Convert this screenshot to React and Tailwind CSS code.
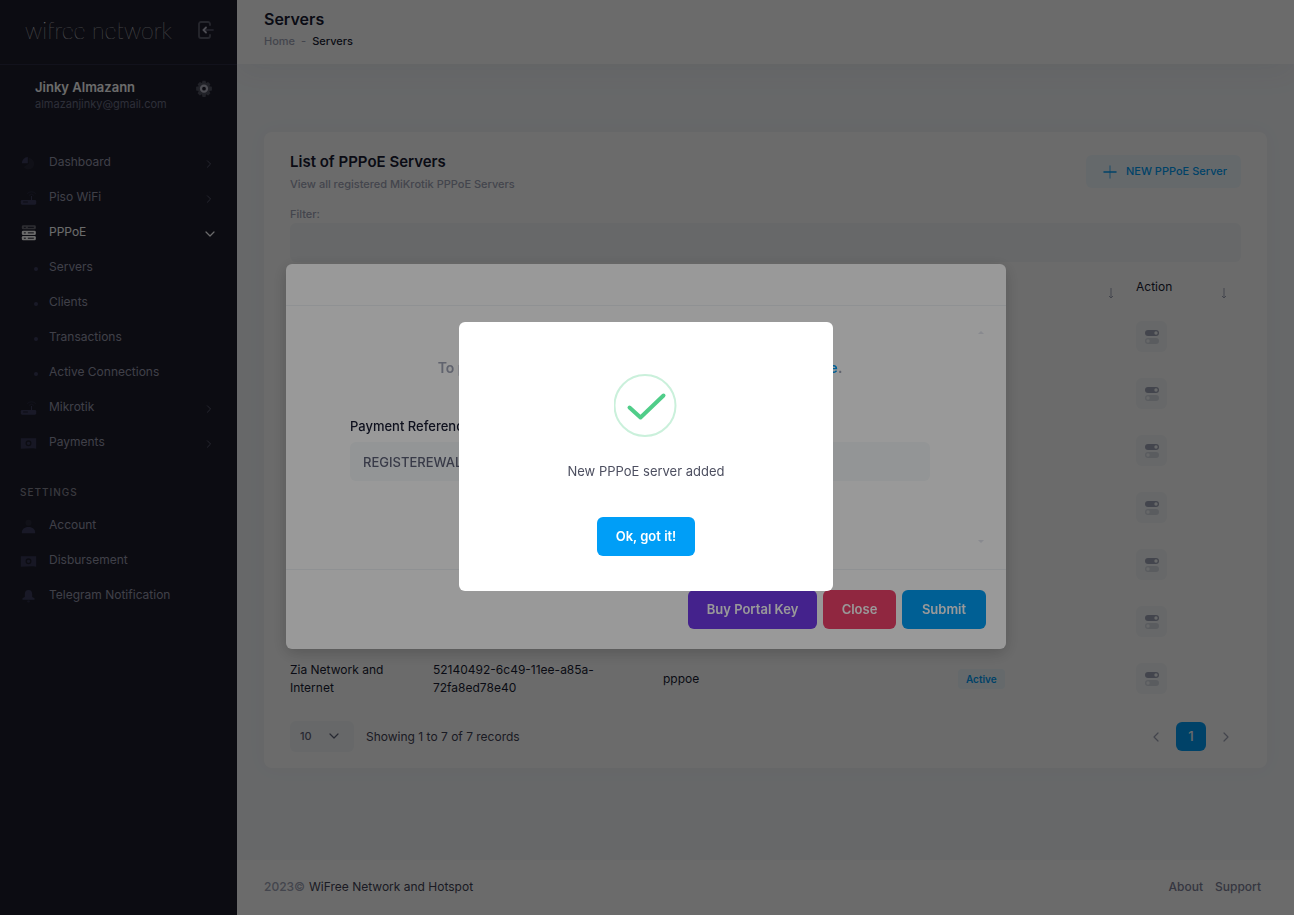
import React from 'react';

const icons = {
  chart: (
    <>
      <path d="M12.500 4.500A8.500 8.500 0 1 1 5 18l7.500-5Z" fill="#494b5e" opacity="0.35" />
      <path d="M2 12.500A9.500 9.500 0 0 1 11 3v9.500Z" fill="#494b74" />
    </>
  ),
  router: (
    <>
      <rect x="0.500" y="15" width="23" height="7" rx="2" fill="#494b74" />
      <path d="M4 18h7" stroke="#1e1e2d" strokeWidth="1.500" />
      <path d="M16.500 9v6" stroke="#494b74" strokeWidth="1.500" />
      <path d="M10 5.500a9 9 0 0 1 13 0M13 8a5 5 0 0 1 7 0" stroke="#494b74" strokeWidth="1.500" opacity="0.4" fill="none" />
    </>
  ),
  servers: (
    <>
      <rect x="2" y="0.500" width="21" height="6" rx="2" fill="#fff" opacity="0.35" />
      <rect x="2" y="8.500" width="21" height="6.500" rx="2" fill="#fff" />
      <rect x="2" y="16.500" width="21" height="6.500" rx="2" fill="#fff" />
      <path d="M5 3.500h3M11 3.500h9M5 11.800h3M11 11.800h9M5 19.800h3M11 19.800h9" stroke="#1e1e2d" strokeWidth="1.500" />
    </>
  ),
  money: (
    <>
      <path d="M0.500 5h23v15.500c-8-1.500-15 0-23 0Z" fill="#494b74" opacity="0.85" />
      <circle cx="12" cy="12.500" r="3.500" fill="none" stroke="#1e1e2d" strokeWidth="2" />
    </>
  ),
  user: (
    <>
      <circle cx="12" cy="7" r="4.500" fill="#494b5e" opacity="0.4" />
      <path d="M2 22c0-5 4-8.500 10-8.500S22 17 22 22c0 .6-.4 1-1 1H3c-.6 0-1-.4-1-1Z" fill="#494b74" />
    </>
  ),
  bell: (
    <>
      <path d="M12 3c3.500 0 5.500 2.500 5.500 6v4.500l3.500 2v2H3v-2l3.500-2V9c0-3.500 2-6 5.500-6Z" fill="#494b74" />
      <circle cx="12" cy="20" r="1.800" fill="#494b74" opacity="0.5" />
    </>
  ),
};

const mainMenu = [
  { label: 'Dashboard', icon: 'chart', arrow: true },
  { label: 'Piso WiFi', icon: 'router', arrow: true },
  { label: 'PPPoE', icon: 'servers', open: true, children: ['Servers', 'Clients', 'Transactions', 'Active Connections'] },
  { label: 'Mikrotik', icon: 'router', arrow: true },
  { label: 'Payments', icon: 'money', arrow: true },
];

const settingsMenu = [
  { label: 'Account', icon: 'user' },
  { label: 'Disbursement', icon: 'money' },
  { label: 'Telegram Notification', icon: 'bell' },
];

const servers = [
  {}, {}, {}, {}, {}, {},
  { name: 'Zia Network and Internet', key: '52140492-6c49-11ee-a85a-72fa8ed78e40', service: 'pppoe', status: 'Active' },
];

const Chevron = ({ className, d = 'M3 1l4 4-4 4' }) => (
  <svg viewBox="0 0 10 10" className={className} fill="none" stroke="currentColor" strokeWidth="1.200" strokeLinecap="round" strokeLinejoin="round" aria-hidden="true">
    <path d={d} />
  </svg>
);

const MenuItem = ({ item }) => (
  <li>
    <a href="#" className={`flex h-[35px] items-center pl-5 pr-[22px] text-xs ${item.open ? 'text-white' : 'text-[#9899ac]'}`}>
      <svg viewBox="0 0 24 24" className={`mr-3 mt-0.5 h-4 w-[17px] ${item.open ? '' : 'opacity-70'}`} aria-hidden="true">{icons[item.icon]}</svg>
      <span className="flex-1">{item.label}</span>
      {item.arrow && <Chevron className="mt-1 mr-0.5 size-2 text-[#5c5e72]" />}
      {item.open && <Chevron className="mt-1 size-2.5 text-white" d="M1 3l4 4 4-4" />}
    </a>
    {item.children && (
      <ul>
        {item.children.map((child) => (
          <li key={child}>
            <a href="#" className="flex h-[35px] items-center pl-[34px] text-xs text-[#9899ac]">
              <span className="mr-[11px] mt-1 size-1 rounded-full bg-[#494b74] opacity-70" />
              {child}
            </a>
          </li>
        ))}
      </ul>
    )}
  </li>
);

const Sidebar = () => (
  <aside className="flex w-[237px] shrink-0 flex-col bg-[#1e1e2d]">
    <div className="flex h-[65px] items-center justify-between border-b border-[#2d2d43] pb-1 pl-[25px] pr-[23px]">
      <a href="#" className="font-['Lato',sans-serif] text-[23px] font-thin leading-6 text-white">wifree network</a>
      <button type="button" aria-label="Toggle sidebar">
        <svg viewBox="0 0 16 18" className="h-[18px] w-4" fill="none" strokeWidth="1.800" strokeLinecap="round">
          <path d="M12 4V3a2 2 0 0 0-2-2H3a2 2 0 0 0-2 2v12a2 2 0 0 0 2 2h7a2 2 0 0 0 2-2v-1" stroke="#5c5d6c" />
          <path d="M8 9h7" stroke="#4a4b5e" />
          <path d="M8 6.500 5.500 9 8 11.500" stroke="#b5b5c3" />
        </svg>
      </button>
    </div>

    <div className="flex justify-between pb-8 pl-[35px] pr-6 pt-[13px]">
      <div>
        <div className="text-[13px] font-semibold leading-[18px] text-white">Jinky Almazann</div>
        <a href="#" className="block text-[11px] leading-4 text-[#6c7086]">almazanjinky@gmail.com</a>
      </div>
      <button type="button" aria-label="User settings" className="mt-0.5 size-[18px]">
        <svg viewBox="0 0 24 24" className="size-[18px]">
          <path d="M10 1h4l.8 3 2.700-1.500 3 3L19 8.200l3.500.8v5l-3.500.8 1.500 2.700-3 3-2.700-1.500-.8 3.500h-4l-.8-3.500-2.700 1.500-3-3L5 14.800 1.500 14V9L5 8.200 3.500 5.500l3-3L9.200 4Z" fill="#50515f" />
          <circle cx="12" cy="11.500" r="4" fill="#1e1e2d" stroke="#b5b5c3" strokeWidth="3" />
        </svg>
      </button>
    </div>

    <nav aria-label="Main">
      <ul>
        {mainMenu.map((item) => <MenuItem key={item.label} item={item} />)}
      </ul>
      <h2 className="pb-[7px] pl-5 pt-[25px] text-[10px] font-medium uppercase leading-4 tracking-widest text-[#8a8a96]">Settings</h2>
      <ul>
        {settingsMenu.map((item) => <MenuItem key={item.label} item={item} />)}
      </ul>
    </nav>
  </aside>
);

const SortArrow = () => (
  <svg viewBox="0 0 6 11" className="mr-3.5 mt-2.5 h-[11px] w-1.5" fill="none" stroke="#a1a5b7" aria-hidden="true">
    <path d="M3 0v10M1 8l2 2 2-2" />
  </svg>
);

const ServerTable = () => (
  <table className="w-full table-fixed text-xs leading-[18px] text-[#181c32]">
    <colgroup>
      <col className="w-[135px]" />
      <col className="w-[230px]" />
      <col className="w-[295px]" />
      <col className="w-[178px]" />
      <col className="w-[113px]" />
    </colgroup>
    <thead>
      <tr className="h-[46px] align-top">
        <th />
        <th />
        <th />
        <th className="pt-4"><div className="flex justify-end"><SortArrow /></div></th>
        <th className="pl-2 pt-4 font-normal">
          <div className="flex justify-between"><span>Action</span><SortArrow /></div>
        </th>
      </tr>
    </thead>
    <tbody>
      {servers.map((server, index) => (
        <tr key={index} className="h-[57px]">
          <td className="pr-2">{server.name}</td>
          <td className="px-2">{server.key}</td>
          <td className="px-2">{server.service}</td>
          <td className="px-2">
            {server.status && (
              <span className="inline-block rounded bg-[#f1faff] px-2 text-[10px] font-semibold leading-5 text-[#009ef7]">{server.status}</span>
            )}
          </td>
          <td className="pl-2">
            <button type="button" aria-label="Server actions" className="flex size-[31px] items-center justify-center rounded-md bg-[#f5f8fa]">
              <svg viewBox="0 0 14 14" className="size-3.5">
                <rect y="0" width="14" height="6" rx="3" fill="#a1a5b7" />
                <circle cx="11" cy="3" r="1.700" fill="#f5f8fa" />
                <rect y="8" width="14" height="6" rx="3" fill="#a1a5b7" opacity="0.35" />
                <circle cx="3" cy="11" r="1.700" fill="#f5f8fa" />
              </svg>
            </button>
          </td>
        </tr>
      ))}
    </tbody>
  </table>
);

const ServerCard = () => (
  <section className="rounded-lg bg-white px-[26px] pb-4 pt-5 shadow-[0_0_20px_rgba(76,87,125,0.04)]">
    <div className="flex items-start justify-between">
      <div>
        <h2 className="text-[15px] font-semibold leading-5 text-[#181c32]">List of PPPoE Servers</h2>
        <p className="mt-1 text-[11px] font-medium leading-4 text-[#a1a5b7]">View all registered MiKrotik PPPoE Servers</p>
      </div>
      <button type="button" className="mt-[3px] flex h-[33px] items-center gap-2 rounded-md bg-[#f1faff] pl-4 pr-3.5 text-[11px] font-medium text-[#009ef7]">
        <svg viewBox="0 0 16 16" className="size-4" fill="none" stroke="currentColor" strokeLinecap="round" aria-hidden="true">
          <path d="M2 8h12" strokeWidth="1.500" />
          <path d="M8 2v12" strokeWidth="1.500" opacity="0.5" />
        </svg>
        NEW PPPoE Server
      </button>
    </div>
    <label htmlFor="filter" className="mt-3.5 block text-[11px] font-medium leading-4 text-[#a1a5b7]">Filter:</label>
    <input id="filter" type="text" className="mt-px block h-[39px] w-full rounded-md bg-[#f5f8fa] px-3 text-[13px] text-[#5e6278]" />
    <ServerTable />
    <div className="mt-3.5 flex items-center justify-between">
      <div className="flex items-center gap-3 text-xs text-[#3f4254]">
        <span className="relative">
          <select aria-label="Records per page" className="h-[31px] w-16 appearance-none rounded-md bg-[#f5f8fa] pl-2.5 text-[11px] font-medium text-[#5e6278]">
            <option>10</option>
          </select>
          <Chevron className="pointer-events-none absolute right-[15px] top-2.5 size-2.5 text-[#5e6278]" d="M1 3l4 4 4-4" />
        </span>
        <span>Showing 1 to 7 of 7 records</span>
      </div>
      <nav aria-label="Pagination" className="flex items-center gap-[15px] pr-2.5 text-[#a1a5b7]">
        <button type="button" aria-label="Previous page"><Chevron className="size-2.5" d="M7 1L3 5l4 4" /></button>
        <button type="button" className="h-[29px] w-[30px] rounded-md bg-[#009ef7] text-[13px] font-medium text-white">1</button>
        <button type="button" aria-label="Next page"><Chevron className="size-2.5" /></button>
      </nav>
    </div>
  </section>
);

const PortalKeyModal = () => (
  <div className="fixed inset-0 flex items-center justify-center bg-black/30 pb-0.5 pr-0.5">
    <div role="dialog" aria-label="Portal key" className="w-[720px] rounded-md bg-white shadow-[0_4px_16px_rgba(0,0,0,0.2)]">
      <div className="h-[42px] border-b border-[#eff2f5]" />
      <div className="flex h-[263px] pr-[22px] pt-[25px]">
        <div className="flex-1 pl-16 pr-12 pt-[25px]">
          <p className="text-center text-sm font-semibold leading-6 text-[#a1a5b7]">
            To purchase a PPPoE portal key, please click this <a href="#" className="text-[#009ef7]">page here</a>.
          </p>
          <label htmlFor="reference" className="mt-9 block text-[13px] font-medium leading-5 text-[#181c32]">Payment Reference</label>
          <input
            id="reference"
            type="text"
            defaultValue="REGISTEREWALLET"
            className="mt-1.5 block h-[39px] w-full rounded-md bg-[#f5f8fa] px-[13px] text-[13px] font-medium text-[#5e6278]"
          />
        </div>
        <div className="flex h-[212px] w-1.5 flex-col justify-between" aria-hidden="true">
          <svg viewBox="0 0 6 3" className="h-[3px] w-1.5"><path d="M0 3l3-3 3 3Z" fill="#e4e6ef" /></svg>
          <svg viewBox="0 0 6 3" className="h-[3px] w-1.5"><path d="M0 0l3 3 3-3Z" fill="#e4e6ef" /></svg>
        </div>
      </div>
      <div className="flex justify-end gap-1.5 border-t border-[#eff2f5] p-5 text-[13px] font-semibold text-white">
        <button type="button" className="h-[39px] w-[129px] rounded-md bg-[#7239ea]">Buy Portal Key</button>
        <button type="button" className="h-[39px] w-[73px] rounded-md bg-[#f1416c]">Close</button>
        <button type="button" className="h-[39px] w-[84px] rounded-md bg-[#009ef7]">Submit</button>
      </div>
    </div>
  </div>
);

const SuccessAlert = () => (
  <div className="fixed inset-0 flex items-center justify-center bg-black/40 pb-0.5 pr-0.5">
    <div role="alertdialog" aria-label="Success" className="flex w-[374px] flex-col items-center rounded-md bg-white pb-[35px] pt-[51px]">
      <svg viewBox="0 0 64 64" className="size-16" fill="none" stroke="#50cd89" aria-hidden="true">
        <circle cx="31" cy="32.500" r="30.500" strokeWidth="2" opacity="0.3" />
        <path d="M15.500 34.500l11 10L49.500 22.500" strokeWidth="4" strokeLinecap="round" strokeLinejoin="round" />
      </svg>
      <p className="mt-6 text-[13px] leading-5 text-[#4d4f60]">New PPPoE server added</p>
      <button type="button" className="mt-9 h-[39px] w-[98px] rounded-md bg-[#009ef7] text-[13px] font-semibold text-white">Ok, got it!</button>
    </div>
  </div>
);

const App = () => {
  return (
    <div className="flex min-h-screen bg-[#f5f8fa] font-['Inter','Liberation_Sans',sans-serif]">
      <Sidebar />
      <div className="flex min-w-0 flex-1 flex-col">
        <header className="h-16 bg-white px-[27px] pt-[9px] shadow-[0_10px_30px_rgba(82,63,105,0.05)]">
          <h1 className="text-base font-semibold leading-5 text-[#181c32]">Servers</h1>
          <nav aria-label="Breadcrumb" className="mt-1 flex gap-1.5 text-[11px] font-medium leading-4">
            <a href="#" className="text-[#a1a5b7]">Home</a>
            <span className="text-[#a1a5b7]">-</span>
            <span className="text-[#181c32]">Servers</span>
          </nav>
        </header>
        <main className="flex-1 px-[27px] pt-[68px]">
          <ServerCard />
        </main>
        <footer className="flex h-[55px] items-center justify-between bg-white pb-0.5 pl-[27px] pr-[33px] text-xs">
          <div className="flex gap-1">
            <span className="font-medium text-[#a1a5b7]">2023©</span>
            <a href="#" className="text-[#3f4254]">WiFree Network and Hotspot</a>
          </div>
          <div className="flex gap-3 font-medium text-[#7e8299]">
            <a href="#">About</a>
            <a href="#">Support</a>
          </div>
        </footer>
      </div>
      <PortalKeyModal />
      <SuccessAlert />
    </div>
  );
};

export default App;
